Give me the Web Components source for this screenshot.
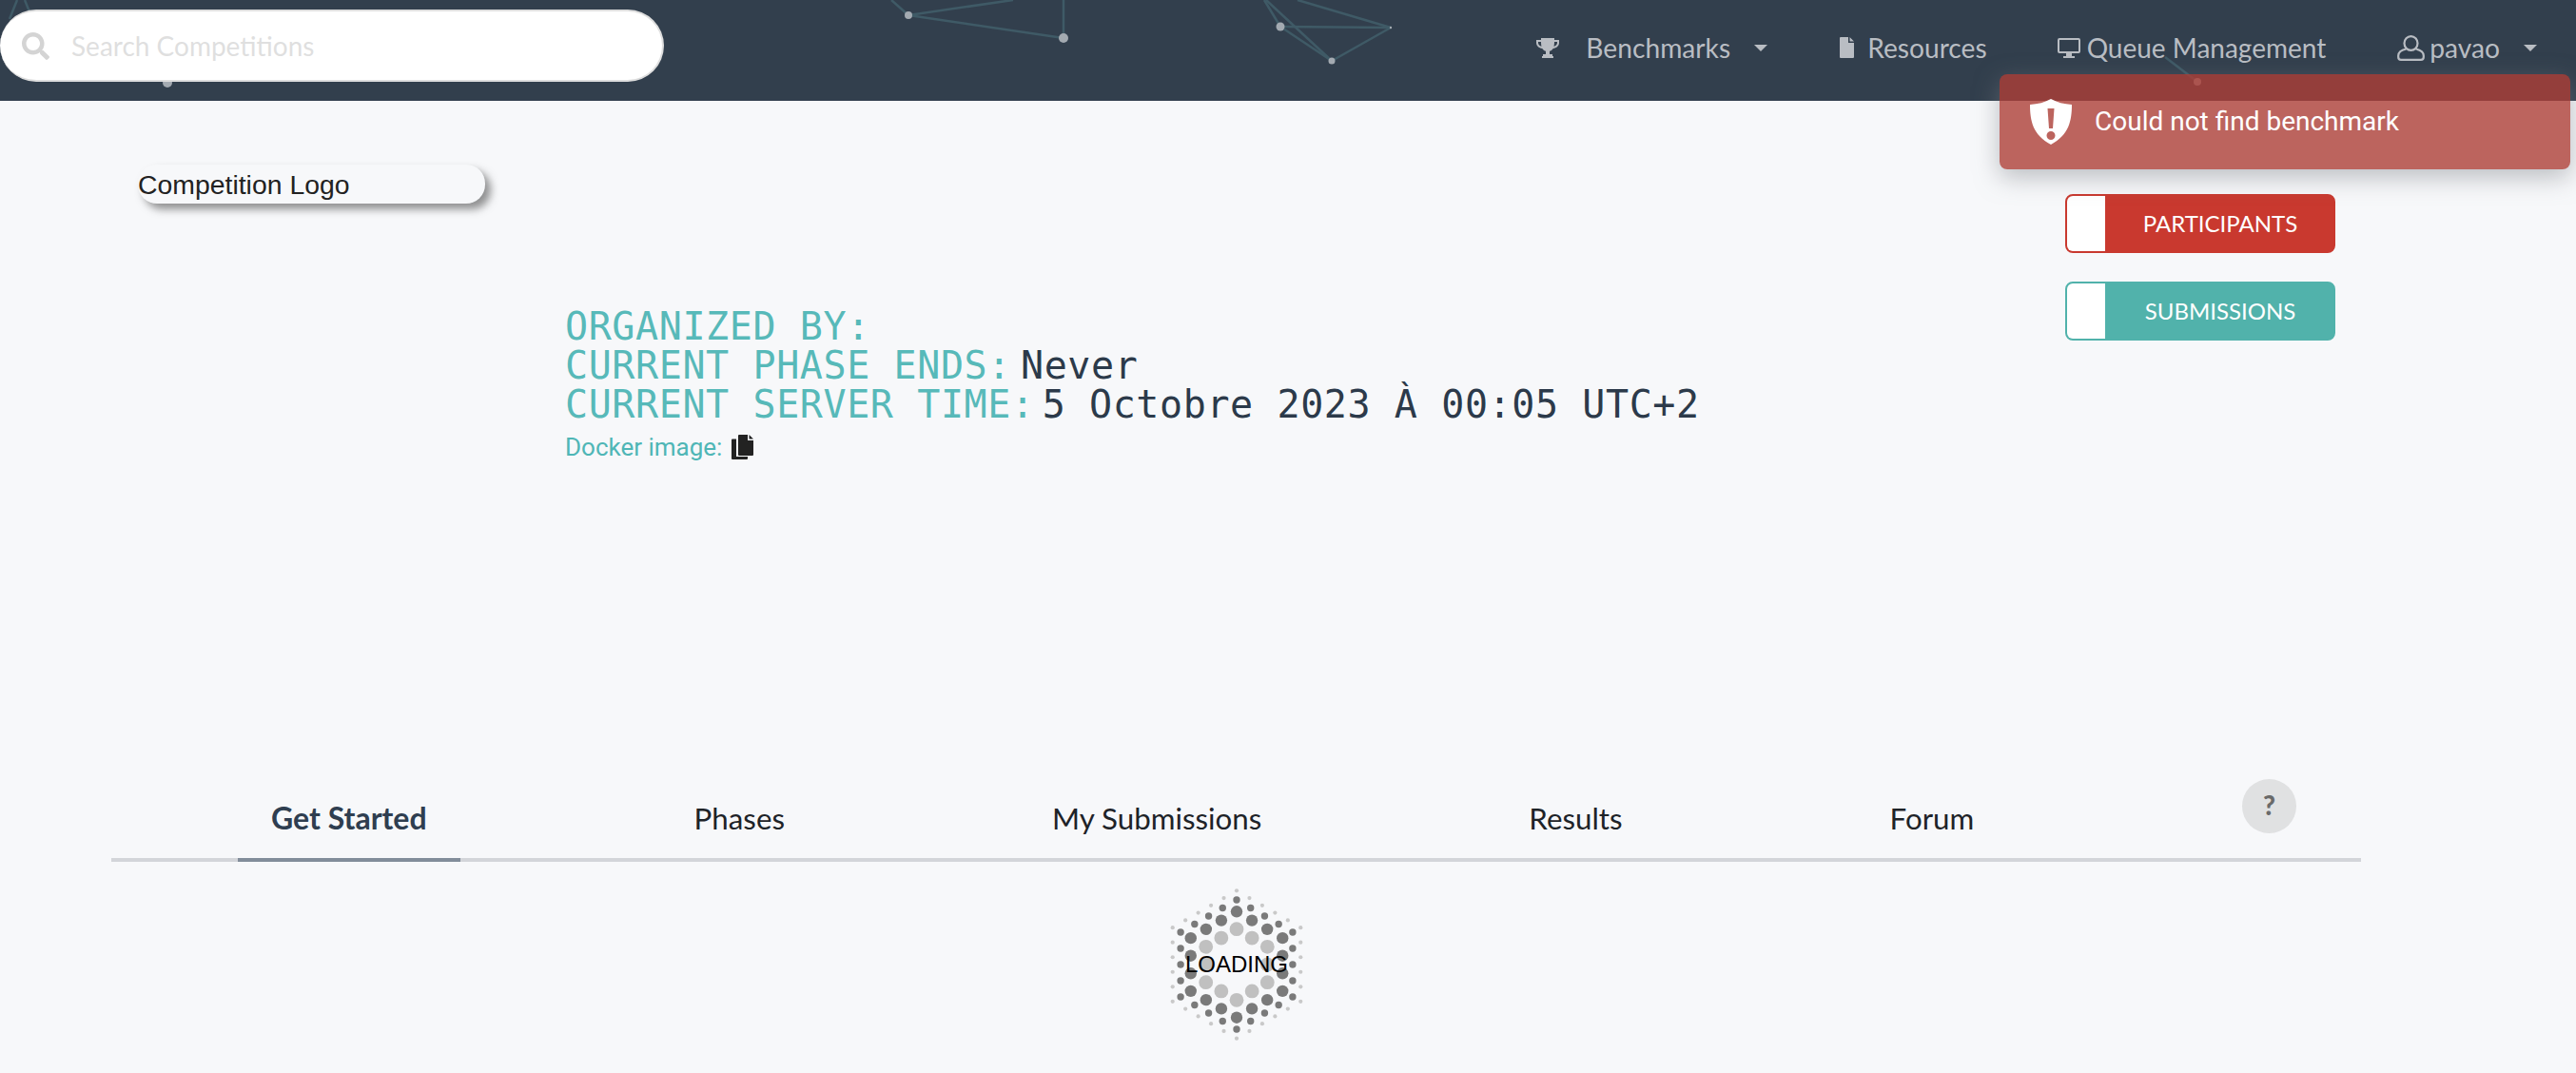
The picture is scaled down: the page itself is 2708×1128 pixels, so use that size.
<!DOCTYPE html>
<html lang="en">
<head>
<meta charset="utf-8">
<title>Competition</title>
<style>
  html, body { margin: 0; height: 100%; background: #f7f8fa; overflow: hidden; }
</style>
</head>
<body>
<app-nav>
  <nav-item>
    <svg slot="icon" width="24" height="21" viewBox="0 0 24 21" style="margin-right:28px"><path fill="currentColor" d="M5 0h14v2h5v3c0 3-2.600 5.500-6.300 6-.9 1.500-2.100 2.400-3.700 2.800V17h3v2h1v2H6v-2h1v-2h3v-3.200C8.400 13.400 7.200 12.500 6.300 11 2.600 10.500 0 8 0 5V2h5zM2 4v1c0 1.700 1.300 3.200 3.500 3.800C5.200 7.500 5 6 5 4zm17 0c0 2-.2 3.500-.5 4.800C20.700 8.200 22 6.700 22 5V4z"/></svg>
    Benchmarks
    <svg slot="caret" width="14" height="7" viewBox="0 0 14 7"><path fill="currentColor" d="M0 0h14L7 7z"/></svg>
  </nav-item>
  <nav-item style="margin-left:76px">
    <svg slot="icon" width="15" height="22" viewBox="0 0 15 22" style="margin-right:14px"><path fill="currentColor" d="M1 0h8v6h6v15a1 1 0 0 1-1 1H1a1 1 0 0 1-1-1V1a1 1 0 0 1 1-1zm9.500 0L15 4.500h-4.500z"/></svg>
    Resources
  </nav-item>
  <nav-item style="margin-left:74px;font-size:28px">
    <svg slot="icon" width="24" height="21" viewBox="0 0 24 21" style="margin-right:7px"><path fill="currentColor" fill-rule="evenodd" d="M2 0h20a2 2 0 0 1 2 2v12a2 2 0 0 1-2 2h-7v3h3v2H6v-2h3v-3H2a2 2 0 0 1-2-2V2a2 2 0 0 1 2-2zm0 2v12h20V2z"/></svg>
    Queue Management
  </nav-item>
  <nav-item style="margin-left:75px">
    <svg slot="icon" width="29" height="27" viewBox="0 0 29 27" style="margin-right:5px"><g fill="none" stroke="currentColor" stroke-width="2.200"><ellipse cx="14.500" cy="8.500" rx="7" ry="7.400"/><path d="M9.500 14.500C5 15.500 1.200 17.500 1.200 21.500v1.500c0 1.500 1 2.800 2.800 2.800h21c1.800 0 2.800-1.300 2.800-2.800v-1.500c0-4-3.800-6-8.300-7"/></g></svg>
    pavao
    <svg slot="caret" width="14" height="7" viewBox="0 0 14 7"><path fill="currentColor" d="M0 0h14L7 7z"/></svg>
  </nav-item>
</app-nav>

<toast-message>Could not find benchmark</toast-message>

<competition-header>
  <span slot="logo">Competition Logo</span>
  <info-line label="ORGANIZED BY:"></info-line>
  <info-line label="CURRENT PHASE ENDS:" gap="10">Never</info-line>
  <info-line label="CURRENT SERVER TIME:" gap="8">5 Octobre 2023 À 00:05 UTC+2</info-line>
  <side-button slot="side" color="#c9392f">PARTICIPANTS</side-button>
  <side-button slot="side" color="#51b2ab">SUBMISSIONS</side-button>
</competition-header>

<tab-bar>
  <tab-item active>Get Started</tab-item>
  <tab-item>Phases</tab-item>
  <tab-item>My Submissions</tab-item>
  <tab-item>Results</tab-item>
  <tab-item>Forum</tab-item>
</tab-bar>

<hex-loader>LOADING</hex-loader>

<script>
function makeTemplate(html) {
  const t = document.createElement('template');
  t.innerHTML = html;
  return t;
}

class Base extends HTMLElement {
  constructor() {
    super();
    this.attachShadow({ mode: 'open' });
    this.shadowRoot.appendChild(this.constructor.template.content.cloneNode(true));
  }
}

class AppNav extends Base {
  static template = makeTemplate(`
    <style>
      :host { display: flex; align-items: center; position: relative; height: 106px; background: #323f4d; overflow: hidden; }
      .net { position: absolute; left: 0; top: 0; }
      .net line { stroke: #3f5a66; stroke-width: 2.500; }
      .net circle { fill: #a3aab1; }
      .search {
        position: relative; box-sizing: border-box; width: 698px; height: 76px; margin-top: -10px;
        display: flex; align-items: center; gap: 23px; padding-left: 23px;
        background: #fff; border: 2px solid #dedede; border-left: 0; border-radius: 38px;
        font: 28px Lato, sans-serif; color: #dfdfdf;
      }
      .search svg { color: #d4d4d4; }
      .menu { position: relative; margin-left: auto; display: flex; align-items: center; margin-right: 41px; margin-top: -6px; }
    </style>
    <svg class="net" width="2708" height="106">
      <line x1="10" y1="20" x2="18" y2="0"/><line x1="26" y1="0" x2="34" y2="20"/>
      <line x1="955" y1="16" x2="937" y2="0"/><line x1="955" y1="16" x2="1065" y2="0"/>
      <line x1="955" y1="16" x2="1118" y2="40"/><line x1="1118" y1="40" x2="1118" y2="0"/>
      <line x1="1346" y1="28" x2="1329" y2="0"/><line x1="1400" y1="64" x2="1331" y2="0"/>
      <line x1="1346" y1="28" x2="1400" y2="64"/><line x1="1346" y1="28" x2="1462" y2="29"/>
      <line x1="1462" y1="29" x2="1400" y2="64"/><line x1="1462" y1="29" x2="1364" y2="0"/>
      <line x1="2276" y1="60" x2="2310" y2="86"/>
      <circle cx="176" cy="87" r="5"/><circle cx="955" cy="16" r="4"/>
      <ellipse cx="1118" cy="40" rx="5" ry="5" fill="#a3aab1"/><circle cx="1346" cy="28" r="4.500"/>
      <circle cx="1462" cy="29" r="1.200"/><circle cx="1400" cy="64" r="3.500"/><circle cx="2310" cy="86" r="4"/>
    </svg>
    <div class="search">
      <svg width="29" height="29" viewBox="0 0 512 512"><path fill="currentColor" d="M505 442.700L405.300 343c-4.500-4.500-10.600-7-17-7H372c27.600-35.300 44-79.700 44-128C416 93.100 322.900 0 208 0S0 93.100 0 208s93.100 208 208 208c48.300 0 92.700-16.400 128-44v16.300c0 6.400 2.500 12.500 7 17l99.700 99.700c9.400 9.400 24.600 9.400 33.900 0l28.300-28.300c9.400-9.400 9.400-24.600.1-34zM208 336c-70.700 0-128-57.200-128-128 0-70.700 57.200-128 128-128 70.700 0 128 57.200 128 128 0 70.700-57.200 128-128 128z"/></svg>
      <span>Search Competitions</span>
    </div>
    <div class="menu"><slot></slot></div>
  `);
}

class NavItem extends Base {
  static template = makeTemplate(`
    <style>
      :host { display: inline-flex; align-items: center; font: 28.200px/34px Lato, sans-serif; color: #b9bdc3; white-space: nowrap; }
      ::slotted([slot="caret"]) { margin-left: 25px; }
    </style>
    <slot name="icon"></slot><slot></slot><slot name="caret"></slot>
  `);
}

class ToastMessage extends Base {
  static template = makeTemplate(`
    <style>
      :host {
        position: absolute; left: 2102px; top: 78px; box-sizing: border-box; width: 600px; height: 100px;
        display: flex; align-items: flex-start; gap: 24px; padding: 26px 0 0 32px;
        background: rgba(173, 62, 55, .8); border-radius: 8px;
        box-shadow: 0 8px 26px rgba(125, 130, 136, .5);
        font: 400 28px/36px Roboto, sans-serif; color: #fff;
      }
      span { margin-top: 6px; }
    </style>
    <svg width="44" height="48" viewBox="0 0 44 48"><path fill="#fff" fill-rule="evenodd" d="M22 0c6 3.500 14 5.500 22 6 0 17-3 32-22 42C3 38 0 23 0 6c8-.5 16-2.500 22-6zM18.500 10l1.500 21h4l1.500-21zM22 34a4.500 4.500 0 1 0 0 9 4.500 4.500 0 0 0 0-9z"/></svg>
    <span><slot></slot></span>
  `);
}

class CompetitionHeader extends Base {
  static template = makeTemplate(`
    <style>
      :host { display: flex; align-items: flex-start; height: 713px; padding: 0 253px 0 145px; box-sizing: border-box; }
      .logo {
        box-sizing: border-box; width: 365px; height: 41px; margin-top: 67px; padding-top: 2px;
        border-radius: 20px; background: #f7f8fa; box-shadow: 6px 6px 9px rgba(60, 60, 60, .55);
        font: 28.400px/38px "Liberation Sans", sans-serif; color: #222;
      }
      .info { flex: 1; margin: 217px 0 0 84px; }
      .docker { display: flex; align-items: center; gap: 10px; margin-top: 7px; font: 26px/34px Roboto, sans-serif; color: #4fb6b6; }
      .side { width: 284px; margin-top: 98px; display: flex; flex-direction: column; gap: 30px; }
    </style>
    <div class="logo"><slot name="logo"></slot></div>
    <div class="info">
      <slot></slot>
      <div class="docker">Docker image:
        <svg width="23" height="26" viewBox="0 0 23 26"><path fill="#222" d="M8 0h9v6h6v15a1 1 0 0 1-1 1H8a1 1 0 0 1-1-1V1a1 1 0 0 1 1-1zm10.500 0L23 4.500h-4.500zM0 5.500a1 1 0 0 1 1-1h4V23h12v2a1 1 0 0 1-1 1H1a1 1 0 0 1-1-1z"/></svg>
      </div>
    </div>
    <div class="side"><slot name="side"></slot></div>
  `);
}

class InfoLine extends Base {
  static template = makeTemplate(`
    <style>
      :host { display: block; height: 41px; font: 40px/41px "DejaVu Sans Mono", monospace; letter-spacing: .6px; color: #2c3a4a; white-space: nowrap; }
      .label { color: #57b9b9; }
    </style>
    <span class="label"></span><span class="value"><slot></slot></span>
  `);
  connectedCallback() {
    this.shadowRoot.querySelector('.label').textContent = this.getAttribute('label');
    this.shadowRoot.querySelector('.value').style.marginLeft = (this.getAttribute('gap') || 0) + 'px';
  }
}

class SideButton extends Base {
  static template = makeTemplate(`
    <style>
      :host { display: flex; box-sizing: border-box; height: 62px; border: 2px solid var(--c); border-radius: 8px; overflow: hidden; background: var(--c); font: 24px/58px Lato, sans-serif; color: #fff; }
      i { width: 40px; background: #fff; }
      span { flex: 1; text-align: center; padding-left: 2px; }
    </style>
    <i></i><span><slot></slot></span>
  `);
  connectedCallback() {
    this.style.setProperty('--c', this.getAttribute('color'));
  }
}

class TabBar extends Base {
  static template = makeTemplate(`
    <style>
      :host { display: flex; align-items: flex-end; box-sizing: border-box; height: 87px; margin: 0 226px 0 117px; padding-left: 133px; gap: 211px; border-bottom: 4px solid #d3d5d9; }
      .help { margin: 0 68px auto auto; width: 57px; height: 57px; border-radius: 50%; background: #e0e1e2; color: #6a6a6a; font: 900 28px/55px Lato, sans-serif; text-align: center; }
    </style>
    <slot></slot>
    <div class="help">?</div>
  `);
}

class TabItem extends Base {
  static template = makeTemplate(`
    <style>
      :host { display: block; padding: 0 35px 24px; margin-bottom: -4px; border-bottom: 4px solid transparent; font: 31.300px/36px Lato, sans-serif; color: #1e2328; white-space: nowrap; }
      :host([active]) { border-bottom-color: #828d9a; font-size: 32px; font-weight: 700; color: #2f3e50; }
    </style>
    <slot></slot>
  `);
}

class HexLoader extends Base {
  static template = makeTemplate(`
    <style>
      :host { display: block; position: relative; width: 160px; height: 160px; margin: 28px auto 0; left: -54px; }
      svg { display: block; }
      span { position: absolute; inset: 0; display: flex; align-items: center; justify-content: center; font: 24px "Liberation Sans", sans-serif; color: #000; }
    </style>
    <svg width="160" height="160" viewBox="-80 -80 160 160"></svg>
    <span><slot></slot></span>
  `);
  connectedCallback() {
    // rings of the hexagon: corner radius, steps per side, dot size, colour
    const rings = [
      [37.3, 2, 7.4, '#c0c0c0'],
      [55.7, 3, 6.2, '#7a7a7a'],
      [68, 4, 3.7, '#7a7a7a'],
      [77.7, 5, 2.1, '#c9c9c9']
    ];
    let dots = '';
    for (const [radius, steps, size, color] of rings) {
      for (let side = 0; side < 6; side++) {
        const a = (side * 60 - 90) * Math.PI / 180;
        const b = ((side + 1) * 60 - 90) * Math.PI / 180;
        for (let i = 0; i < steps; i++) {
          const t = i / steps;
          const x = radius * (Math.cos(a) * (1 - t) + Math.cos(b) * t);
          const y = radius * (Math.sin(a) * (1 - t) + Math.sin(b) * t);
          dots += `<circle cx="${x.toFixed(2)}" cy="${y.toFixed(2)}" r="${size}" fill="${color}"/>`;
        }
      }
    }
    this.shadowRoot.querySelector('svg').innerHTML = dots;
  }
}

customElements.define('app-nav', AppNav);
customElements.define('nav-item', NavItem);
customElements.define('toast-message', ToastMessage);
customElements.define('competition-header', CompetitionHeader);
customElements.define('info-line', InfoLine);
customElements.define('side-button', SideButton);
customElements.define('tab-bar', TabBar);
customElements.define('tab-item', TabItem);
customElements.define('hex-loader', HexLoader);
</script>
</body>
</html>
